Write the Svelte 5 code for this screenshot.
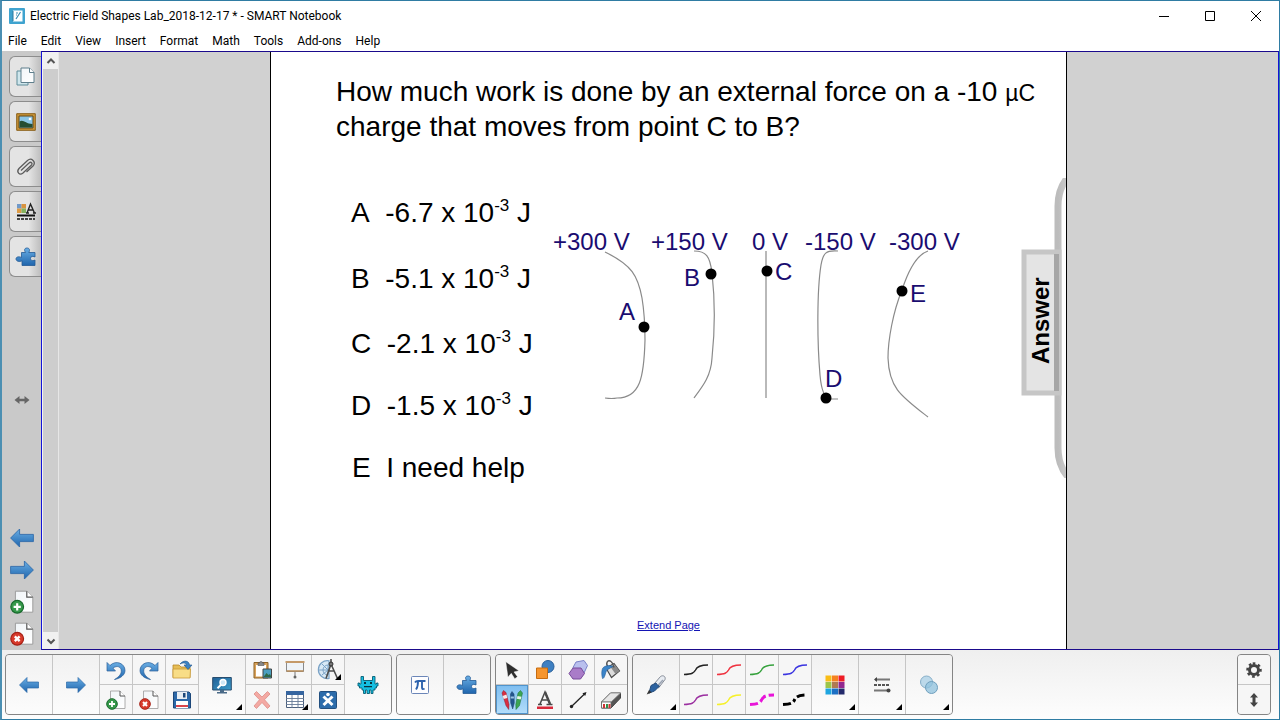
<script lang="ts">
  type Tool = { icon: string; label: string; big?: boolean; more?: boolean; color?: string; dash?: string; width?: number };

  const menus = ['File', 'Edit', 'View', 'Insert', 'Format', 'Math', 'Tools', 'Add-ons', 'Help'];

  const tabs = [
    { icon: 'pages', label: 'Page Sorter' },
    { icon: 'gallery', label: 'Gallery' },
    { icon: 'clip', label: 'Attachments' },
    { icon: 'properties', label: 'Properties' },
    { icon: 'puzzle', label: 'Add-ons' }
  ];

  const pageNav = [
    { icon: 'left', label: 'Previous page' },
    { icon: 'right', label: 'Next page' },
    { icon: 'add', label: 'Add page' },
    { icon: 'remove', label: 'Delete page' }
  ];

  // tools fill each group column by column
  const groups: Tool[][] = [
    [
      { icon: 'left', label: 'Previous page', big: true },
      { icon: 'right', label: 'Next page', big: true },
      { icon: 'undo', label: 'Undo' },
      { icon: 'add', label: 'Add page' },
      { icon: 'redo', label: 'Redo' },
      { icon: 'remove', label: 'Delete page' },
      { icon: 'open', label: 'Open' },
      { icon: 'save', label: 'Save' },
      { icon: 'screen', label: 'View screens', big: true, more: true },
      { icon: 'paste', label: 'Paste' },
      { icon: 'delete', label: 'Delete' },
      { icon: 'shade', label: 'Screen shade' },
      { icon: 'table', label: 'Table', more: true },
      { icon: 'compass', label: 'Measurement tools', more: true },
      { icon: 'response', label: 'Response' },
      { icon: 'monster', label: 'Activity builder', big: true }
    ],
    [
      { icon: 'pi', label: 'Math', big: true },
      { icon: 'puzzle', label: 'Add-ons', big: true }
    ],
    [
      { icon: 'select', label: 'Select' },
      { icon: 'pens', label: 'Pens' },
      { icon: 'shapes', label: 'Shapes' },
      { icon: 'text', label: 'Text' },
      { icon: 'polygons', label: 'Regular polygons' },
      { icon: 'line', label: 'Lines' },
      { icon: 'fill', label: 'Fill' },
      { icon: 'eraser', label: 'Eraser' }
    ],
    [
      { icon: 'pen', label: 'Pen types', big: true, more: true },
      { icon: 'stroke', label: 'Black pen', color: '#222' },
      { icon: 'stroke', label: 'Purple pen', color: '#9b2fa0' },
      { icon: 'stroke', label: 'Red pen', color: '#ef3340' },
      { icon: 'stroke', label: 'Yellow pen', color: '#f6f02a' },
      { icon: 'stroke', label: 'Green pen', color: '#35a13c' },
      { icon: 'stroke', label: 'Magenta dashed pen', color: '#e815d8', dash: '8 3', width: 3 },
      { icon: 'stroke', label: 'Blue pen', color: '#3b35e0' },
      { icon: 'stroke', label: 'Black dotted pen', color: '#000', dash: '8 3 3 3', width: 3 },
      { icon: 'palette', label: 'Color', big: true, more: true },
      { icon: 'styles', label: 'Line style', big: true, more: true },
      { icon: 'opacity', label: 'Transparency', big: true, more: true }
    ]
  ];

  const swatches = ['#f9bd16', '#f58220', '#ee1c25', '#9cc54a', '#b07a52', '#92278f', '#1ea5e0', '#1c6fc4', '#232a6b'];

  // objects placed on the page, in page coordinates
  const choices = [
    { letter: 'A', value: '-6.7 x 10', x: 80, y: 145 },
    { letter: 'B', value: '-5.1 x 10', x: 80, y: 211 },
    { letter: 'C', value: '-2.1 x 10', x: 80, y: 276 },
    { letter: 'D', value: '-1.5 x 10', x: 80, y: 338 },
    { letter: 'E', value: 'I need help', x: 81, y: 400, plain: true }
  ];

  const equipotentials = [
    { label: '+300 V', x: 13, d: 'M65 32 C92 45 98 56 102 78 Q105 96 105 120 C104 158 100 178 77 178 Q72 179 65 178' },
    { label: '+150 V', x: 111, d: 'M154 31 C166 31 170 36 172 53 C175 80 175 110 172 138 C171 156 163 166 154 178' },
    { label: '0 V', x: 212, d: 'M226 31 V178' },
    { label: '-150 V', x: 265, d: 'M298 31 C286 30 283 33 281 45 C277 70 277 120 280 155 Q282 178 290 179 H298' },
    { label: '-300 V', x: 349, d: 'M388 31 Q373 36 362 70 C353 92 348 120 348 138 C349 168 361 176 388 197' }
  ];

  const points = [
    { name: 'A', cx: 104, cy: 107, x: 79, y: 100 },
    { name: 'B', cx: 171, cy: 54, x: 144, y: 66 },
    { name: 'C', cx: 227, cy: 51, x: 235, y: 60 },
    { name: 'D', cx: 286, cy: 178, x: 285, y: 167 },
    { name: 'E', cx: 362, cy: 71, x: 370, y: 82 }
  ];

  let activeTool = $state('Pens');
</script>

{#snippet icon(name: string, tool?: Tool)}
  <svg class="icon" viewBox="0 0 20 20" aria-hidden="true">
    {#if name === 'left'}
      <path d="M.5 10 8 2.500V7H19.500v6H8v4.500z" fill="url(#blue)" stroke="#2b68a8" stroke-width=".7" />
    {:else if name === 'right'}
      <path d="M19.500 10 12 2.500V7H.5v6H12v4.500z" fill="url(#blue)" stroke="#2b68a8" stroke-width=".7" />
    {:else if name === 'undo' || name === 'redo'}
      <g transform={name === 'redo' ? 'matrix(-1 0 0 1 20 0)' : undefined}>
        <path d="M1 2.500v8.500h8.500L7 8.200c4-3.400 8.500-1.200 8.300 3C15.200 14.600 12 17.500 8.500 19.500c6-1 10.500-4.500 10.500-9C19 3.500 10-.500 4 5.500z" fill="url(#blue)" stroke="#2b5f98" stroke-width=".7" />
      </g>
    {:else if name === 'add' || name === 'remove'}
      <path d="M4.500 1h9.500l5 5v12.500H4.500z" fill="url(#sheet)" stroke="#9a9a9a" stroke-width=".8" />
      <path d="M14 1v5h5" fill="#fff" stroke="#555" />
      {#if name === 'add'}
        <circle cx="6" cy="14" r="5.300" fill="#35984a" stroke="#176a2c" />
        <path d="M6 11v6M3 14h6" stroke="#fff" stroke-width="1.800" />
      {:else}
        <circle cx="6" cy="14" r="5.300" fill="#d83a2c" stroke="#a52015" />
        <path d="m4 12 4 4m0-4-4 4" stroke="#fff" stroke-width="2" />
      {/if}
    {:else if name === 'open'}
      <path d="M1 5h6l2 2h9v10.500H1z" fill="#e6bd55" stroke="#b8892a" stroke-width=".8" />
      <path d="M1 9h17.500l-.5 9H1z" fill="#f8dd86" stroke="#c99b38" stroke-width=".8" />
      <path d="M8 4C11 0 17 0 17.500 5H20l-4 4.500L12 5h2.500C13.500 2.500 11 2.500 8 4z" fill="#3c83c4" stroke="#24568c" stroke-width=".6" />
    {:else if name === 'save'}
      <path d="M1.500 2h15.500l1.500 1.500V18h-17z" fill="#2c68a8" stroke="#1c4779" />
      <path d="M5 2h10v7H5z" fill="#e8eef4" />
      <path d="M11 3h2.500v4.500H11z" fill="#1c4779" />
      <path d="M4 11h12v7H4z" fill="#fff" />
      <path d="M4 15h12v2H4z" fill="#d9454c" />
    {:else if name === 'screen'}
      <path d="M.7 2.500h18.600v12.500H.7z" fill="url(#monitor)" stroke="#284d6e" />
      <path d="M8 15h4v2h3v1.500H5V17h3z" fill="#4a6a88" />
      <circle cx="11" cy="7.500" r="3" fill="#cfe8f6" stroke="#fff" stroke-width="1.400" />
      <path d="m9 9.800-3.500 3.500" stroke="#fff" stroke-width="2" />
    {:else if name === 'paste'}
      <path d="M2 2.500h14V18H2z" fill="#d9a25a" stroke="#8d6227" />
      <path d="M4 5h10v11.500H4z" fill="#fff" />
      <path d="M6 3h1.500a1.500 1.500 0 0 1 3 0H12v2.500H6z" fill="#888" stroke="#555" stroke-width=".6" />
      <path d="M11 9h8.500v9H11z" fill="#4c9fc0" stroke="#444" />
      <path d="m11.500 17 3-4 2 2 1.500-1 1.500 3z" fill="#2f6a48" />
    {:else if name === 'delete'}
      <path d="m2 4 2.500-2.500L10 7l5.500-5.500L18 4l-5.500 5.700L18 16l-2.500 2.500-5.500-6-5.500 6L2 16l5.500-6.300z" fill="#f3a9a3" stroke="#de8d87" stroke-width=".8" />
    {:else if name === 'shade'}
      <path d="M1.500 2h17v9.500h-17z" fill="#eef3f8" stroke="#8a8a8a" />
      <path d="M.5 1h19v2H.5z" fill="#c49a6a" />
      <path d="M1.500 11h17" stroke="#b98d58" stroke-width="1.500" />
      <path d="M10 12v4" stroke="#777" />
      <circle cx="10" cy="17" r="1.500" fill="#666" />
    {:else if name === 'table'}
      <path d="M1.500 1.500h17v16h-17z" fill="#fff" stroke="#4b5f7c" />
      <path d="M1 1h18v4H1z" fill="#3565a0" />
      <path d="M1 8.500h18M1 11.500h18M1 14.500h18M7 5v13M13 5v13" stroke="#667a96" stroke-width=".9" />
    {:else if name === 'compass'}
      <path d="M11 .8A9 9 0 1 0 11 18.500z" fill="#d8e8f5" stroke="#7aa2c6" stroke-width="1.200" />
      <path d="M10 5a5 5 0 0 0 0 10zM1 10h10M4 4l6 6-6 5" fill="none" stroke="#7aa2c6" />
      <path d="m13 4-5 14.500M13 4l6.500 14.500M13-1v4M10 11h6" fill="none" stroke="#4d4d4d" stroke-width="1.600" />
      <circle cx="13" cy="4" r="2" fill="#777" stroke="#333" />
    {:else if name === 'response'}
      <rect x="1.500" y="1.500" width="17" height="17" rx="1" fill="#2c6cab" stroke="#235080" />
      <path d="m5.500 6.500 9 8.500m0-8.500-9 8.500" stroke="#fff" stroke-width="3" />
      <circle cx="10" cy="4.500" r="1.800" fill="#fff" />
    {:else if name === 'monster'}
      <path d="M3 1.500h2.500v4h9v-4H17v7.500h1.500V8H20v3h-1.500v2H17v2h-2v3.500h-2V15h-1.500v3.500H9V15H7.500v3.500h-2V15H4v-2H1.500v-2H0V8h1.500v1H3z" fill="#15bfe2" stroke="#075e74" stroke-width=".9" />
      <path d="M6 7h2v2H6zm6 0h2v2h-2zM6 11h8v1.200H6z" fill="#08333f" />
    {:else if name === 'pi'}
      <rect x="1.500" y="1.500" width="17" height="17" rx="1" fill="#fdfdff" stroke="#6b86b8" />
      <path d="M5 7.500C6 6 7 6 8 6h7.500M8 6.500c0 3-.5 6-2 8m6-8v6c0 2 1 2 2.500 1" fill="none" stroke="#2d62ae" stroke-width="1.900" />
    {:else if name === 'puzzle'}
      <path d="M5.500 5.500h4C7.500 2.500 9 1 11 1s3.500 1.500 1.800 4.500H19V10c-3-1.500-4.500 0-4.500 1.500S16 14.500 19 13v5.500H6v-4.700C3 15.500 0 14 0 12s2.500-3 5.500-1.500z" fill="url(#blue)" stroke="#255a96" stroke-width=".8" />
    {:else if name === 'select'}
      <path d="M5 1v15.500l3.800-3.300L11.500 19l3-1.500-2.800-5.300 5-.6z" fill="#2e2e2e" stroke="#fff" stroke-width=".4" transform="rotate(-8 10 10)" />
    {:else if name === 'pens'}
      <path d="M0 3 1.500.5 4 2.500l3 12-.3 5L4 15.500z" fill="#d92e42" stroke="#8f1c2a" stroke-width=".5" />
      <path d="m.6 6 3.900-1.500.8 3.500-3.600 1z" fill="#f9e6e9" />
      <path d="M8.500 4 10 1.500 12 4l.3 9-1.600 6-2-6z" fill="#23568e" stroke="#1c3d66" stroke-width=".5" />
      <path d="M8.700 6.500h3.200v2H8.700z" fill="#9dc4e4" />
      <path d="M16 3 18.500.5l2 2.500-3 12.500-3.500 4-.2-5z" fill="#3ca653" stroke="#1f6c32" stroke-width=".5" />
      <path d="m15.500 6 4 .8-.8 2.700-3.900-.8z" fill="#e5f4e8" />
    {:else if name === 'shapes'}
      <circle cx="13" cy="6.500" r="6" fill="#3e80c2" stroke="#285f9a" />
      <path d="M1.500 8h11v10.500h-11z" fill="#f6952d" stroke="#c66c11" />
    {:else if name === 'text'}
      <path d="M3 14.500h4M11.500 14.500h6M5 14 10 2l5 12M6.500 10h7" fill="none" stroke="#4a4a4a" stroke-width="1.500" />
      <path d="m10 2 5 12" stroke="#4a4a4a" stroke-width="2.400" />
      <path d="M2 16.500h16v2.500H2z" fill="#d8283a" />
    {:else if name === 'polygons'}
      <path d="m8 2 8-1.500 3.500 5-3.500 7.500H8L5 7.500z" fill="#b9c0ee" stroke="#7a82c8" />
      <path d="M5 8h8l3.500 5.500L12.500 19H5L1 13.500z" fill="#a97cc8" stroke="#774a9a" />
    {:else if name === 'line'}
      <path d="M3.500 16.500 17 3.500" stroke="#222" stroke-width="1.300" />
      <circle cx="3.500" cy="16.500" r="1.700" fill="#222" />
      <path d="m18.500 2-1.300 4-2.800-2.800z" fill="#222" />
    {:else if name === 'fill'}
      <path d="m5 8 8-4.500 5.500 7.500-8 6.500z" fill="#dcdcdc" stroke="#4c4c4c" stroke-width="1.200" />
      <path d="m14 5 4.500 6-4 3-5-7z" fill="#8a8a8a" />
      <path d="M7 7C4 3 7-1 10 1.500c1.500 1 2 3 3 6" fill="none" stroke="#555" stroke-width="1.400" />
      <path d="M12 6.500C8 4.500 3 6 1.500 8.500.5 11 .5 15 1.500 18.500 4 18.500 4 13 6 10z" fill="#3b84c8" stroke="#255e98" stroke-width=".6" />
    {:else if name === 'eraser'}
      <path d="m.5 12 9-9h10V8L10 18H.5z" fill="#555" stroke="#444" />
      <path d="m.5 12 9-9h10L10 12z" fill="#e6e6e6" stroke="#888" stroke-width=".8" />
      <path d="M.5 12H10v6H.5z" fill="#fff" stroke="#666" stroke-width=".8" />
      <path d="M2 14h2v4H2zm5.500 0h2v4h-2z" fill="#cf3434" />
      <path d="M5 14h2v4H5z" fill="#31924b" />
    {:else if name === 'pen'}
      <path d="M14.500 1.500c2.500-1.800 5.500 0 4.500 3L12.500 13 8 9z" fill="#e8ecf2" stroke="#858b96" />
      <path d="m17 5-6.500 7" stroke="#9aa3b1" stroke-width="1.500" />
      <path d="m5 10.500 5-2.500c1 2 2 2.500 3.500 3L8.500 16 3 18z" fill="#2c62a0" stroke="#234b7a" />
      <path d="m3 15-2.300 4.500 5-2z" fill="#333" />
    {:else if name === 'palette'}
      {#each swatches as color, i}
        <rect x={.5 + (i % 3) * 6.5} y={.5 + Math.floor(i / 3) * 6.5} width="6" height="6" fill={color} />
      {/each}
    {:else if name === 'styles'}
      <path d="M3 4.500h15" stroke="#777" stroke-width="2" />
      <path d="m2 4.500 3-2.500v5z" fill="#444" />
      <path d="M2 10h16" stroke="#555" stroke-width="2" stroke-dasharray="3 1" />
      <path d="M2 15.500h14" stroke="#777" stroke-width="2" />
      <circle cx="16.500" cy="15.500" r="2" fill="#444" />
    {:else if name === 'opacity'}
      <circle cx="7.500" cy="7" r="6" fill="#bcd9ea" stroke="#86aec8" />
      <circle cx="12.500" cy="12.500" r="6" fill="#8fc1dd" fill-opacity=".75" stroke="#6f9fbd" />
    {:else if name === 'stroke'}
      <path d="M-2 14.500C6 14 8 13 9.500 10 11 6.500 14 5 22 5" fill="none" stroke={tool?.color} stroke-width={tool?.width ?? 1.5} stroke-dasharray={tool?.dash} />
    {:else if name === 'pages'}
      <path d="M1 4h11v14H1z" fill="#cfe6ec" stroke="#5f8c99" />
      <path d="M5 1h8.500L18 5.500V15.500H5z" fill="url(#sheet)" stroke="#5f7f8c" />
      <path d="M13.500 1v4.500H18" fill="#fff" stroke="#5f7f8c" />
    {:else if name === 'gallery'}
      <path d="M.7 1.700h18.600v16.600H.7z" fill="#c89438" stroke="#8a5f19" />
      <path d="M3 4h14v12H3z" fill="#8cc6e6" stroke="#654712" />
      <path d="M3.500 9.500c4-2.500 6 2.500 13 2.500v3.500h-13z" fill="#254d32" />
      <circle cx="14" cy="7" r="1.300" fill="#fff" />
    {:else if name === 'clip'}
      <path d="m5 13.500 8-7.500c2-2 4 .5 2.500 2l-8.500 8c-3.500 3-7-1-4-4.500l8.500-8c4-3.500 9 1.500 5.500 5.500L10.500 15" fill="none" stroke="#5c5c5c" stroke-width="1.300" />
    {:else if name === 'properties'}
      <path d="M1 2h4.500v4.500H1z" fill="#7099c8" />
      <path d="M5.500 2H10v4.500H5.500z" fill="#d8933f" />
      <path d="M1 6.500h4.500V11H1z" fill="#dc9a44" />
      <path d="M5.500 6.500H10V11H5.500z" fill="#85b35f" />
      <path d="M11 11 14.500 2l4 9M12 8h5M10 11h3m4 0h3" fill="none" stroke="#222" stroke-width="1.400" />
      <path d="M1 13.500h18" stroke="#111" stroke-width="2" />
      <path d="M1 17h18" stroke="#111" stroke-width="1.300" stroke-dasharray="3 1" />
    {:else if name === 'gear'}
      <g fill="none" stroke="#444">
        <circle cx="10" cy="10" r="4.500" stroke-width="3" />
        <circle cx="10" cy="10" r="6.500" stroke-width="2.500" stroke-dasharray="2.600 2.505" transform="rotate(-101 10 10)" />
      </g>
    {:else if name === 'updown'}
      <path d="m10 3 4 4.500h-2.500v5H14L10 17l-4-4.500h2.500v-5H6z" fill="#444" />
    {:else if name === 'widen'}
      <path d="m2.500 10 5-4v2.800h5V6l5 4-5 4v-2.800h-5V14z" fill="#666" />
    {/if}
  </svg>
{/snippet}

<svg class="defs" width="0" height="0" aria-hidden="true">
  <defs>
    <linearGradient id="blue" x1="0" y1="0" x2="0" y2="1">
      <stop offset="0" stop-color="#6aaee4" />
      <stop offset="1" stop-color="#1f65ad" />
    </linearGradient>
    <linearGradient id="monitor" x1="0" y1="0" x2="1" y2="1">
      <stop offset="0" stop-color="#1f5f96" />
      <stop offset="1" stop-color="#3d9cc9" />
    </linearGradient>
    <linearGradient id="sheet" x1="0" y1="0" x2="1" y2="1">
      <stop offset="0" stop-color="#f1f5f8" />
      <stop offset="1" stop-color="#fff" />
    </linearGradient>
    <linearGradient id="rim" x1="0" y1="0" x2="1" y2="0">
      <stop offset="0" stop-color="#bcbcbc" />
      <stop offset="1" stop-color="#cfcfcf" />
    </linearGradient>
  </defs>
</svg>

<div class="window">
  <header class="titlebar">
    <svg class="app-icon" viewBox="0 0 16 16" aria-hidden="true">
      <rect width="16" height="16" rx="1" fill="#3fa3cf" />
      <path d="M4 2.500h9.500v11H4z" fill="#fff" />
      <path d="M3 4h2M3 6h2M3 8h2M3 10h2M3 12h2" stroke="#2b789e" />
      <path d="m7 11 4.500-7M7 5h2M7 7h1" stroke="#3b8db3" stroke-width="1.200" />
    </svg>
    <h1>Electric Field Shapes Lab_2018-12-17 * - SMART Notebook</h1>
    <div class="window-buttons">
      <button type="button" aria-label="Minimize"><svg viewBox="0 0 12 12"><path d="M1 6.500h10" /></svg></button>
      <button type="button" aria-label="Maximize"><svg viewBox="0 0 12 12"><path d="M1.500 1.500h9v9h-9z" /></svg></button>
      <button type="button" aria-label="Close"><svg viewBox="0 0 12 12"><path d="m1 1 10 10M11 1 1 11" /></svg></button>
    </div>
  </header>

  <nav class="menubar" aria-label="Menu">
    {#each menus as menu}
      <button type="button">{menu}</button>
    {/each}
  </nav>

  <div class="workspace">
    <aside class="sidebar">
      <div class="tabs">
        {#each tabs as tab}
          <button type="button" class="tab" aria-label={tab.label}>{@render icon(tab.icon)}</button>
        {/each}
      </div>
      <button type="button" class="nav-button nav-button--widen" aria-label="Resize sidebar">{@render icon('widen')}</button>
      <div class="page-nav">
        {#each pageNav as item}
          <button type="button" class="nav-button" aria-label={item.label}>{@render icon(item.icon)}</button>
        {/each}
      </div>
    </aside>

    <main class="pane">
      <div class="scrollbar">
        <button type="button" aria-label="Scroll up"><svg viewBox="0 0 10 10"><path d="m1.500 7 3.500-3.500L8.500 7" /></svg></button>
        <button type="button" aria-label="Scroll down"><svg viewBox="0 0 10 10"><path d="m1.500 3.500 3.500 3.500 3.500-3.500" /></svg></button>
      </div>

      <div class="desk">
        <article class="page">
          <p class="question">
            How much work is done by an external force on a -10 <span class="unit">µC</span><br />
            charge that moves from point C to B?
          </p>

          {#each choices as choice}
            <p class="choice" style={`left: ${choice.x}px; top: ${choice.y}px;`}>
              {choice.letter}&nbsp; {choice.value}{#if !choice.plain}<sup>-3</sup> J{/if}
            </p>
          {/each}

          <svg class="diagram" viewBox="0 0 430 210" role="img" aria-label="Equipotential lines">
            {#each equipotentials as line}
              <path d={line.d} />
              <text x={line.x} y="30">{line.label}</text>
            {/each}
            {#each points as point}
              <circle cx={point.cx} cy={point.cy} r="5.500" />
              <text x={point.x} y={point.y}>{point.name}</text>
            {/each}
          </svg>

          <button type="button" class="answer">
            <svg viewBox="0 0 45 300">
              <path d="M49 -3Q37 9 37 28V270Q37 289 49 301" fill="none" stroke="url(#rim)" stroke-width="7" />
              <rect x="3" y="74" width="35" height="141" fill="#e4e4e4" stroke="#c6c6c6" stroke-width="5" />
              <path d="M33 76h5v137h-5z" fill="#a6a6a6" />
              <text transform="translate(28 186) rotate(-90)">Answer</text>
            </svg>
          </button>

          <a class="extend" href="#extend">Extend Page</a>
        </article>
      </div>
    </main>
  </div>

  <footer class="toolbar">
    {#each groups as group}
      <div class="group">
        {#each group as tool}
          <button
            type="button"
            class="tool"
            class:tool--big={tool.big}
            class:tool--more={tool.more}
            class:tool--active={activeTool === tool.label}
            aria-label={tool.label}
            onclick={() => (activeTool = tool.label)}
          >
            {@render icon(tool.icon, tool)}
          </button>
        {/each}
      </div>
    {/each}
    <div class="group group--end">
      <button type="button" class="tool" aria-label="Customize toolbar">{@render icon('gear')}</button>
      <button type="button" class="tool" aria-label="Move toolbar">{@render icon('updown')}</button>
    </div>
  </footer>
</div>

<style>
  :global(body) {
    margin: 0;
  }

  button {
    padding: 0;
    border: 0;
    background: none;
    color: inherit;
    font: inherit;
  }

  .defs {
    position: absolute;
  }

  .window {
    display: flex;
    flex-direction: column;
    box-sizing: border-box;
    min-height: 100vh;
    border: 1px solid #2f7ca3;
    border-left: 2px solid #4b8fb2;
    background: #fff;
    color: #000;
    font-family: Roboto, 'Open Sans', sans-serif;
    font-size: 12px;
  }

  .icon {
    display: block;
    width: 20px;
    height: 20px;
    overflow: visible;
  }

  .titlebar {
    display: flex;
    height: 29px;
    align-items: center;
    padding-left: 7px;
  }

  .app-icon {
    width: 16px;
    height: 16px;
  }

  .titlebar h1 {
    margin: 0 auto 0 5px;
    font-size: 12px;
    font-weight: 400;
    white-space: nowrap;
  }

  .window-buttons {
    display: flex;
  }

  .window-buttons button {
    display: grid;
    width: 46px;
    height: 29px;
    place-items: center;
  }

  .window-buttons svg {
    width: 12px;
    height: 12px;
    fill: none;
    stroke: #000;
  }

  .menubar {
    display: flex;
    height: 21px;
    align-items: center;
    gap: 14px;
    padding-left: 6px;
  }

  .workspace {
    display: flex;
    flex: 1;
  }

  .sidebar {
    display: flex;
    flex: 0 0 39px;
    flex-direction: column;
    align-items: stretch;
    justify-content: space-between;
    background: #c9c9c9;
  }

  .tabs {
    display: flex;
    flex-direction: column;
    gap: 4px;
    padding: 5px 0 0 7px;
  }

  .tab {
    display: grid;
    height: 41px;
    place-items: center;
    border: 1px solid #8d8d8d;
    border-right: 0;
    border-radius: 6px 0 0 6px;
    background: linear-gradient(to right, #e4e4e4 60%, #bdbdbd);
  }

  .nav-button {
    display: grid;
    width: 39px;
    height: 32px;
    place-items: center;
  }

  .nav-button .icon {
    width: 24px;
    height: 24px;
  }

  .nav-button--widen .icon {
    width: 20px;
    height: 20px;
  }

  .pane {
    display: flex;
    flex: 1;
    border: 1px solid #1a0a8c;
    border-right-color: #1414d8;
    border-left-color: #1414d8;
    background: #d1d1d1;
  }

  .scrollbar {
    display: flex;
    box-sizing: border-box;
    flex: 0 0 17px;
    flex-direction: column;
    justify-content: space-between;
    border-right: 1px solid #e6e6e6;
    border-left: 1px solid #f4f4f4;
    background: #cdcdcd;
  }

  .scrollbar button {
    display: grid;
    height: 17px;
    place-items: center;
    background: #f0f0f0;
  }

  .scrollbar svg {
    width: 10px;
    height: 10px;
    fill: none;
    stroke: #555;
    stroke-width: 2;
  }

  .desk {
    display: flex;
    flex: 1;
    padding: 0 211px;
  }

  .page {
    position: relative;
    display: flex;
    flex: 1;
    flex-direction: column;
    align-items: center;
    justify-content: space-between;
    overflow: hidden;
    border: solid #000;
    border-width: 0 1px;
    background: #fff;
    font-family: 'Liberation Sans', Arial, sans-serif;
  }

  .question {
    align-self: stretch;
    margin: 22px 0 0 65px;
    font-size: 28px;
    line-height: 35px;
    white-space: nowrap;
  }

  .unit {
    font-size: 23px;
    line-height: 0;
  }

  .choice {
    position: absolute;
    margin: 0;
    font-size: 28px;
    line-height: 32px;
    white-space: nowrap;
  }

  .choice sup {
    font-size: 17px;
    line-height: 0;
    vertical-align: 11px;
  }

  .diagram {
    position: absolute;
    top: 168px;
    left: 269px;
    width: 430px;
    height: 210px;
  }

  .diagram path {
    fill: none;
    stroke: #8a8a8a;
    stroke-width: 1.2;
  }

  .diagram text {
    fill: #1a0c70;
    font-size: 24px;
  }

  .answer {
    position: absolute;
    top: 126px;
    right: 0;
    width: 45px;
    height: 300px;
  }

  .answer svg {
    display: block;
    width: 45px;
    height: 300px;
  }

  .answer text {
    font-size: 24px;
    font-weight: 700;
  }

  .extend {
    margin-bottom: 17px;
    color: #1414b4;
    font-size: 11px;
    line-height: 14px;
  }

  .toolbar {
    display: flex;
    gap: 4px;
    padding: 4px 8px 4px 3px;
    background: linear-gradient(#efefef, #fdfdfd);
  }

  .group {
    display: grid;
    grid-auto-flow: column;
    grid-template-rows: 29px 29px;
    gap: 1px;
    overflow: hidden;
    border: 1px solid #858585;
    border-radius: 4px;
    background: #c6c6c6;
  }

  .group--end {
    margin-left: auto;
  }

  .tool {
    position: relative;
    display: grid;
    width: 32px;
    place-items: center;
    background: #f6f6f6;
  }

  .tool--big {
    width: 46px;
    grid-row: span 2;
    background: linear-gradient(#f1f1f1, #fcfcfc);
  }

  .tool--more::after {
    position: absolute;
    right: 3px;
    bottom: 4px;
    border: 3px solid;
    border-color: transparent #000 #000 transparent;
    content: '';
  }

  .tool--active {
    background: linear-gradient(#7dbdf0, #b4defb);
    box-shadow: inset 0 0 0 1px #4f93cb;
  }
</style>
